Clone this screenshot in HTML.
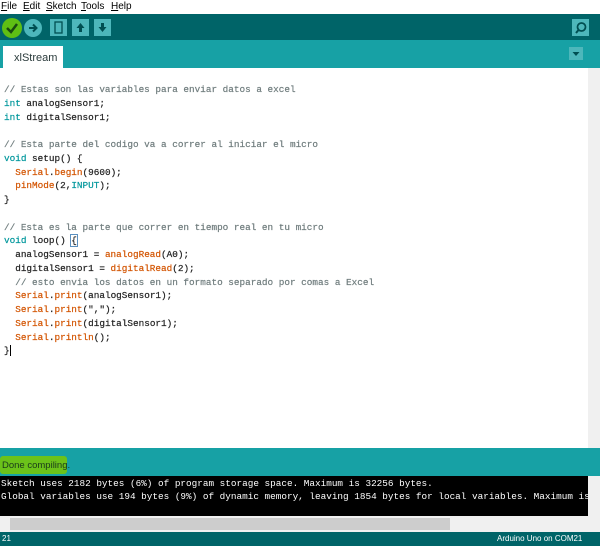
<!DOCTYPE html>
<html><head><style>
*{margin:0;padding:0;box-sizing:border-box}
body{width:600px;height:546px;overflow:hidden;background:#fff;font-family:"Liberation Sans",sans-serif;position:relative}
.abs{position:absolute}
#menu{top:0;left:0;width:600px;height:14px;background:#fff;font-size:10px;color:#000}
#menu span{position:absolute;top:1px}
#tb{top:14px;left:0;width:600px;height:26px;background:#006468}
#tabs{top:40px;left:0;width:600px;height:28px;background:#17a1a5}
.btn{position:absolute;top:5px;width:18px;height:18px;border-radius:50%;background:#4db7bb}
.sq{position:absolute;top:5px;width:17px;height:17px;background:#4db7bb}
#tab{left:3px;top:46px;width:60px;height:22px;background:#fff;font-size:11px;color:#2b3b3c;padding:6px 0 0 11px}
#code{left:4px;top:83px;font-family:"Liberation Mono",monospace;font-size:9.35px;line-height:13.75px;white-space:pre;color:#222;-webkit-text-stroke:0.2px}
.c{color:#6f7c7d}.k{color:#00979c}.o{color:#d35400}
#vs{left:588px;top:68px;width:12px;height:380px;background:#f0f0f0}
#status{top:448px;left:0;width:600px;height:28px;background:#17a1a5}
#done{left:0;top:456px;width:67px;height:18px;background:#6bc21a;border-radius:3px;font-size:9.5px;color:#1a3a1a;padding:4px 0 0 2px;white-space:nowrap}
#con{top:476px;left:0;width:588px;height:40px;background:#000;font-family:"Liberation Mono",monospace;font-size:9.35px;line-height:13px;color:#fff;white-space:pre;padding:1px 0 0 1px;overflow:hidden}
#cvs{top:476px;left:588px;width:12px;height:40px;background:#f0f0f0}
#hs{top:516px;left:0;width:600px;height:16px;background:#f0f0f0}
#bot{top:532px;left:0;width:600px;height:14px;background:#006468;color:#fff;font-size:8px}
</style></head><body>
<div id="menu" class="abs"><span style="left:1px"><u>F</u>ile</span><span style="left:23px"><u>E</u>dit</span><span style="left:46px"><u>S</u>ketch</span><span style="left:81px"><u>T</u>ools</span><span style="left:111px"><u>H</u>elp</span></div>
<div id="tb" class="abs">
<div class="btn" style="left:2px;top:4px;width:20px;height:20px;background:#5fbf14"><svg width="20" height="20"><path d="M5 10 L9 14 L15 6" stroke="#1a4a10" stroke-width="2.5" fill="none"/></svg></div>
<div class="btn" style="left:24px"><svg width="18" height="18"><path d="M5 9 H12 M9 5.5 L12.5 9 L9 12.5" stroke="#004f52" stroke-width="2" fill="none"/></svg></div>
<div class="sq" style="left:50px"><svg width="17" height="17"><rect x="5" y="3" width="7" height="11" fill="none" stroke="#004f52" stroke-width="1.3"/></svg></div>
<div class="sq" style="left:72px"><svg width="17" height="17"><path d="M8.5 4 L4.5 9 H12.5 Z M7 9 V13 H10 V9" fill="#004f52"/></svg></div>
<div class="sq" style="left:94px"><svg width="17" height="17"><path d="M8.5 13 L4.5 8 H12.5 Z M7 8 V4 H10 V8" fill="#004f52"/></svg></div>
<div class="sq" style="left:572px;top:5px"><svg width="17" height="17"><circle cx="9.5" cy="8" r="4" fill="none" stroke="#004f52" stroke-width="1.8"/><path d="M6.5 11 L4 14" stroke="#004f52" stroke-width="2"/></svg></div>
</div>
<div id="tabs" class="abs"><div class="sq" style="left:569px;top:7px;width:14px;height:13px"><svg width="14" height="13"><path d="M3.5 5 H10.5 L7 9 Z" fill="#004f52"/></svg></div></div>
<div id="tab" class="abs">xlStream</div>
<div id="code" class="abs"><span class="c">// Estas son las variables para enviar datos a excel</span>
<span class="k">int</span> analogSensor1;
<span class="k">int</span> digitalSensor1;

<span class="c">// Esta parte del codigo va a correr al iniciar el micro</span>
<span class="k">void</span> setup() {
  <span class="o">Serial</span>.<span class="o">begin</span>(9600);
  <span class="o">pinMode</span>(2,<span class="k">INPUT</span>);
}

<span class="c">// Esta es la parte que correr en tiempo real en tu micro</span>
<span class="k">void</span> loop() <span style="outline:1px solid #5a8fbf">{</span>
  analogSensor1 = <span class="o">analogRead</span>(A0);
  digitalSensor1 = <span class="o">digitalRead</span>(2);
  <span class="c">// esto envia los datos en un formato separado por comas a Excel</span>
  <span class="o">Serial</span>.<span class="o">print</span>(analogSensor1);
  <span class="o">Serial</span>.<span class="o">print</span>(",");
  <span class="o">Serial</span>.<span class="o">print</span>(digitalSensor1);
  <span class="o">Serial</span>.<span class="o">println</span>();
}<span style="border-left:1.5px solid #000"></span></div>
<div id="vs" class="abs"></div>
<div id="status" class="abs"></div>
<div id="done" class="abs">Done compiling.</div>
<div id="con" class="abs">Sketch uses 2182 bytes (6%) of program storage space. Maximum is 32256 bytes.
Global variables use 194 bytes (9%) of dynamic memory, leaving 1854 bytes for local variables. Maximum is</div>
<div id="cvs" class="abs"></div>
<div id="hs" class="abs"><div class="abs" style="left:10px;top:2px;width:440px;height:12px;background:#cdcdcd"></div></div>
<div id="bot" class="abs"><span class="abs" style="left:2px;top:2px">21</span><span class="abs" style="left:497px;top:2px">Arduino Uno on COM21</span></div>
</body></html>
